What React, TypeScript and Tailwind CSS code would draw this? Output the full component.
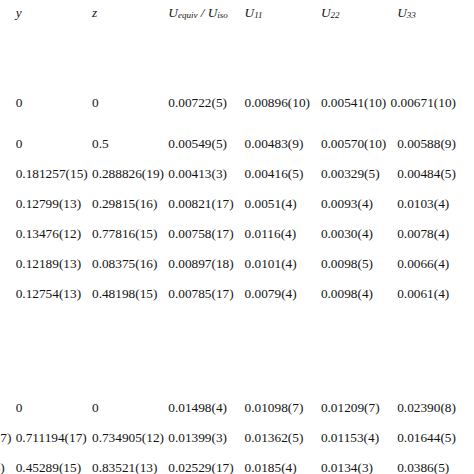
const cols = "grid grid-cols-[repeat(7,76.3px)] whitespace-nowrap";

type Row = { cells: string[]; mt: string; shiftLast?: boolean };

const rows: Row[] = [
  { cells: ["", "0", "0", "0.00722(5)", "0.00896(10)", "0.00541(10)", "0.00671(10)"], mt: "mt-[62.5px]", shiftLast: true },
  { cells: ["", "0", "0.5", "0.00549(5)", "0.00483(9)", "0.00570(10)", "0.00588(9)"], mt: "mt-[11px]" },
  { cells: ["", "0.181257(15)", "0.288826(19)", "0.00413(3)", "0.00416(5)", "0.00329(5)", "0.00484(5)"], mt: "" },
  { cells: ["", "0.12799(13)", "0.29815(16)", "0.00821(17)", "0.0051(4)", "0.0093(4)", "0.0103(4)"], mt: "" },
  { cells: ["", "0.13476(12)", "0.77816(15)", "0.00758(17)", "0.0116(4)", "0.0030(4)", "0.0078(4)"], mt: "" },
  { cells: ["", "0.12189(13)", "0.08375(16)", "0.00897(18)", "0.0101(4)", "0.0098(5)", "0.0066(4)"], mt: "" },
  { cells: ["", "0.12754(13)", "0.48198(15)", "0.00785(17)", "0.0079(4)", "0.0098(4)", "0.0061(4)"], mt: "" },
  { cells: ["", "0", "0", "0.01498(4)", "0.01098(7)", "0.01209(7)", "0.02390(8)"], mt: "mt-[84px]" },
  { cells: ["0.500000(17)", "0.711194(17)", "0.734905(12)", "0.01399(3)", "0.01362(5)", "0.01153(4)", "0.01644(5)"], mt: "" },
  { cells: ["0.31072(15)", "0.45289(15)", "0.83521(13)", "0.02529(17)", "0.0185(4)", "0.0134(3)", "0.0386(5)"], mt: "" },
];

function Sub({ base, sub }: { base: string; sub: string }) {
  return (
    <span>
      {base}
      <sub className="text-[9px] relative top-[1px] align-baseline">{sub}</sub>
    </span>
  );
}

export default function App() {
  return (
    <div className="w-[474px] h-[474px] overflow-hidden bg-white text-[#141414] text-[13.3px] font-['Liberation_Serif','Times_New_Roman',serif]">
      <div className="-ml-[60.6px]">
        <div className={`${cols} h-[25px] leading-[25px] italic`}>
          <span></span>
          <span>y</span>
          <span>z</span>
          <span>
            <Sub base="U" sub="equiv" /> / <Sub base="U" sub="iso" />
          </span>
          <Sub base="U" sub="11" />
          <Sub base="U" sub="22" />
          <Sub base="U" sub="33" />
        </div>
        {rows.map((r, i) => (
          <div key={i} className={`${cols} h-[30px] leading-[30px] ${r.mt}`}>
            {r.cells.map((c, j) => (
              <span key={j} className={r.shiftLast && j === 6 ? "-ml-[6.6px]" : ""}>
                {c}
              </span>
            ))}
          </div>
        ))}
      </div>
    </div>
  );
}
